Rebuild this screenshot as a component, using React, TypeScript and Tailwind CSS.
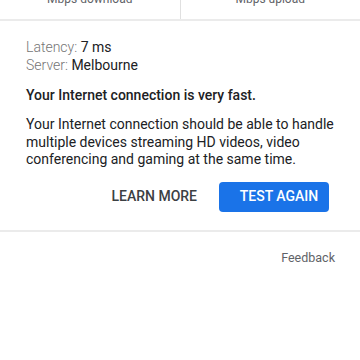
export default function App() {
  return (
    <div className="h-[360px] w-[360px] overflow-hidden bg-white font-['Roboto',sans-serif] text-[#202124]">
      {/* Results header (scrolled off) */}
      <div className="-mt-[10px] flex h-[31px] border-b-2 border-[#ebebeb]">
        <div className="flex flex-1 items-start justify-center border-r border-[#e0e0e0] text-[12px] leading-[18px] text-[#5f6368]">
          Mbps download
        </div>
        <div className="flex flex-1 items-start justify-center text-[12px] leading-[18px] text-[#5f6368]">
          Mbps upload
        </div>
      </div>

      <div className="px-[26px] pt-[17px]">
        <div className="text-[14px] leading-[18px]">
          <div>
            <span className="font-light text-[#757575]">Latency:</span> 7 ms
          </div>
          <div>
            <span className="font-light text-[#757575]">Server:</span> Melbourne
          </div>
        </div>
        <p className="mt-[12px] text-[14px] font-medium leading-[18px]">
          Your Internet connection is very fast.
        </p>
        <p className="mt-[12px] text-[14px] leading-[17.5px]">
          Your Internet connection should be able to handle multiple devices streaming HD videos, video conferencing and gaming at the same time.
        </p>
      </div>

      <div className="mt-[13px] flex items-center justify-end gap-[22px] pr-[31px]">
        <button className="text-[14px] font-medium uppercase text-[#3c4043]">Learn more</button>
        <button className="h-[30px] w-[110px] rounded-[4px] bg-[#1a73e8] pl-[10px] text-[14px] font-medium uppercase text-white">
          Test again
        </button>
      </div>

      <div className="mt-[18px] border-t-2 border-[#ebebeb]" />

      <div className="flex justify-end pr-[25px] pt-[17px]">
        <span className="text-[12.5px] text-[#5f6368]">Feedback</span>
      </div>
    </div>
  );
}
